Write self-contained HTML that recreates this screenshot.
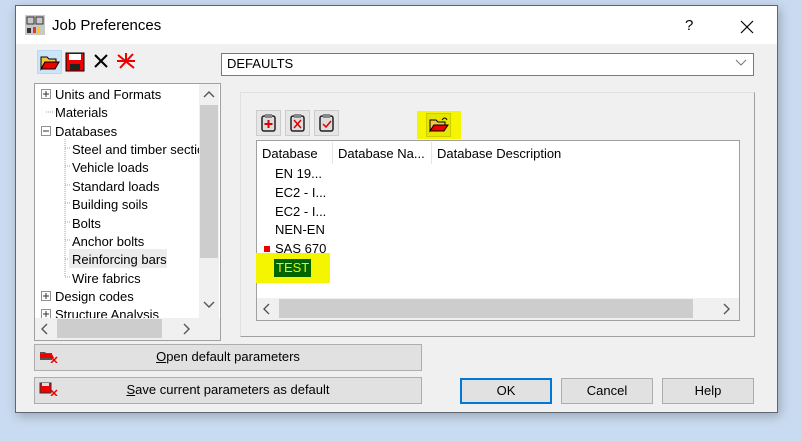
<!DOCTYPE html>
<html><head><meta charset="utf-8"><style>
*{margin:0;padding:0;box-sizing:border-box}
body{width:801px;height:441px;background:#c9dbf0;font-family:"Liberation Sans",sans-serif;font-size:13px;color:#000;position:relative;overflow:hidden}
.abs{position:absolute}
#win{left:15px;top:5px;width:763px;height:408px;background:#f0f0f0;border:1px solid #5f6670;box-shadow:2px 3px 10px rgba(0,0,0,.25)}
#title{left:0;top:0;width:761px;height:38px;background:#fff}
.t{position:absolute;white-space:nowrap}
.btn{position:absolute;background:#e1e1e1;border:1px solid #adadad;text-align:center;line-height:24px}
.sb{background:#cdcdcd}
</style></head><body>
<div id="win" class="abs">
 <div id="title" class="abs">
  <svg class="abs" style="left:9px;top:9px" width="20" height="20"><rect width="20" height="20" fill="#c8c8c8"/><rect x="2" y="2" width="7" height="7" fill="none" stroke="#333"/><rect x="11" y="2" width="7" height="7" fill="none" stroke="#333"/><rect x="2" y="13" width="4" height="5" fill="#333"/><rect x="8" y="12" width="3" height="6" fill="#e33"/><rect x="12" y="12" width="3" height="6" fill="#fc0"/></svg>
  <div class="t" style="left:36px;top:11px;font-size:15px">Job Preferences</div>
  <div class="t" style="left:669px;top:11px;font-size:15px">?</div>
  <svg class="abs" style="left:724px;top:14px" width="14" height="14"><path d="M1 1L13 13M13 1L1 13" stroke="#000" stroke-width="1.2"/></svg>
 </div>
</div>
<!-- toolbar -->
<div class="abs" style="left:37px;top:50px;width:25px;height:24px;background:#cce4f7;border:1px solid #b9d8f1"></div>
<svg class="abs" style="left:40px;top:53px" width="20" height="18"><path d="M1 4h6l2 2h7v3H5L1 16z" fill="#f5c542" stroke="#000"/><path d="M5 9h14l-4 7H1z" fill="#e00" stroke="#000"/></svg>
<svg class="abs" style="left:65px;top:52px" width="20" height="20"><rect x="1" y="1" width="18" height="18" fill="#e00" stroke="#000"/><rect x="4" y="2" width="12" height="6" fill="#fff"/><rect x="5" y="12" width="10" height="6" fill="#222"/></svg>
<svg class="abs" style="left:93px;top:53px" width="16" height="16"><path d="M2 2L14 14M14 2L2 14" stroke="#000" stroke-width="2"/></svg>
<svg class="abs" style="left:116px;top:52px" width="20" height="18"><path d="M2 3L18 16M17 2L4 16M1 9h18M10 1v7" stroke="#e00" stroke-width="2"/></svg>
<!-- combo -->
<div class="abs" style="left:221px;top:53px;width:533px;height:23px;background:#fff;border:1px solid #7a7a7a"></div>
<div class="t" style="left:227px;top:56px">DEFAULTS</div>
<svg class="abs" style="left:735px;top:59px" width="12" height="8"><path d="M1 1l5 5 5-5" stroke="#777" fill="none"/></svg>
<!-- tree -->
<div class="abs" style="left:34px;top:83px;width:187px;height:258px;background:#fff;border:1px solid #a0a0a0"></div>
<div class="abs" style="left:199px;top:84px;width:20px;height:234px;background:#f0f0f0"></div>
<div class="abs sb" style="left:200px;top:105px;width:18px;height:153px"></div>
<svg class="abs" style="left:203px;top:91px" width="12" height="8"><path d="M1 6l5-5 5 5" stroke="#555" fill="none" stroke-width="1.4"/></svg>
<svg class="abs" style="left:203px;top:301px" width="12" height="8"><path d="M1 1l5 5 5-5" stroke="#555" fill="none" stroke-width="1.4"/></svg>
<div class="abs" style="left:35px;top:318px;width:185px;height:22px;background:#f0f0f0"></div>
<div class="abs sb" style="left:57px;top:319px;width:105px;height:19px"></div>
<svg class="abs" style="left:41px;top:323px" width="8" height="12"><path d="M6 1L1 6l5 5" stroke="#555" fill="none" stroke-width="1.4"/></svg>
<svg class="abs" style="left:183px;top:323px" width="8" height="12"><path d="M1 1l5 5-5 5" stroke="#555" fill="none" stroke-width="1.4"/></svg>
<div class="abs" style="left:35px;top:84px;width:164px;height:234px;overflow:hidden">
 <svg class="abs" style="left:0;top:0" width="60" height="240">
  <g stroke="#a0a0a0" stroke-dasharray="1 1" fill="none">
   <path d="M11 28H19M30 55V193M30 64H36M30 82H36M30 101H36M30 119H36M30 138H36M30 156H36M30 175H36M30 193H36"/>
  </g>
  <g fill="#fff" stroke="#919191"><rect x="6.5" y="5.5" width="9" height="9"/><rect x="6.5" y="42.5" width="9" height="9"/><rect x="6.5" y="207.5" width="9" height="9"/><rect x="6.5" y="225.5" width="9" height="9"/></g>
  <g stroke="#333"><path d="M8 10h6M11 7v6M8 47h6M8 212h6M11 209v6M8 230h6M11 227v6"/></g>
 </svg>
 <div class="t" style="left:20px;top:3px">Units and Formats</div>
 <div class="t" style="left:20px;top:21px">Materials</div>
 <div class="t" style="left:20px;top:40px">Databases</div>
 <div class="t" style="left:37px;top:58px">Steel and timber sections</div>
 <div class="t" style="left:37px;top:76px">Vehicle loads</div>
 <div class="t" style="left:37px;top:95px">Standard loads</div>
 <div class="t" style="left:37px;top:113px">Building soils</div>
 <div class="t" style="left:37px;top:132px">Bolts</div>
 <div class="t" style="left:37px;top:150px">Anchor bolts</div>
 <div class="abs" style="left:34px;top:165px;width:98px;height:19px;background:#ececec"></div>
 <div class="t" style="left:37px;top:168px">Reinforcing bars</div>
 <div class="t" style="left:37px;top:187px">Wire fabrics</div>
 <div class="t" style="left:20px;top:205px">Design codes</div>
 <div class="t" style="left:20px;top:223px">Structure Analysis</div>
</div>
<!-- right group -->
<div class="abs" style="left:240px;top:92px;width:515px;height:245px;border:1px solid #fff;border-right-color:#a0a0a0;border-bottom-color:#a0a0a0;border-left-color:#e0e0e0;border-top-color:#e0e0e0"></div>
<div class="abs" style="left:256px;top:110px;width:25px;height:26px;background:#e6e6e6;border:1px solid #ccc"></div>
<div class="abs" style="left:285px;top:110px;width:25px;height:26px;background:#e6e6e6;border:1px solid #ccc"></div>
<div class="abs" style="left:314px;top:110px;width:25px;height:26px;background:#e6e6e6;border:1px solid #ccc"></div>
<svg class="abs" style="left:260px;top:113px" width="18" height="20"><rect x="2" y="3" width="13" height="15" rx="2" fill="#ddd" stroke="#222" stroke-width="1.5"/><rect x="5" y="1" width="7" height="4" fill="#888"/><path d="M8.5 7v8M4.5 11h8" stroke="#d00" stroke-width="2"/></svg>
<svg class="abs" style="left:289px;top:113px" width="18" height="20"><rect x="2" y="3" width="13" height="15" rx="2" fill="#ddd" stroke="#222" stroke-width="1.5"/><rect x="5" y="1" width="7" height="4" fill="#888"/><path d="M5 7l7 8M12 7l-7 8" stroke="#d00" stroke-width="1.5"/></svg>
<svg class="abs" style="left:318px;top:113px" width="18" height="20"><rect x="2" y="3" width="13" height="15" rx="2" fill="#ddd" stroke="#222" stroke-width="1.5"/><rect x="5" y="1" width="7" height="4" fill="#888"/><path d="M5 11l3 3 5-6" stroke="#d00" stroke-width="1.5" fill="none"/></svg>
<div class="abs" style="left:417px;top:111px;width:44px;height:28px;background:#f5f500"></div>
<div class="abs" style="left:426px;top:113px;width:25px;height:24px;background:#e6e600;border:1px solid #cc0"></div>
<svg class="abs" style="left:429px;top:115px" width="20" height="18"><path d="M1 5h6l2 2h7v3H5L1 16z" fill="#f5c542" stroke="#000"/><path d="M5 10h14l-4 6H1z" fill="#e00" stroke="#000"/><path d="M13 5q3-4 5 0" stroke="#000" fill="none"/></svg>
<!-- list -->
<div class="abs" style="left:256px;top:140px;width:484px;height:181px;background:#fff;border:1px solid #a0a0a0"></div>
<div class="abs" style="left:332px;top:142px;width:1px;height:22px;background:#e5e5e5"></div>
<div class="abs" style="left:431px;top:142px;width:1px;height:22px;background:#e5e5e5"></div>
<div class="t" style="left:262px;top:146px">Database</div>
<div class="t" style="left:338px;top:146px">Database Na...</div>
<div class="t" style="left:437px;top:146px">Database Description</div>
<div class="t" style="left:275px;top:166px">EN 19...</div>
<div class="t" style="left:275px;top:185px">EC2 - I...</div>
<div class="t" style="left:275px;top:204px">EC2 - I...</div>
<div class="t" style="left:275px;top:222px">NEN-EN</div>
<div class="abs" style="left:264px;top:246px;width:6px;height:6px;background:#e00"></div>
<div class="t" style="left:275px;top:241px">SAS 670</div>
<div class="abs" style="left:256px;top:253px;width:74px;height:30px;background:#f5f500"></div>
<div class="abs" style="left:274px;top:259px;width:37px;height:18px;background:#006400"></div>
<div class="t" style="left:276px;top:260px;color:#e8f500">TEST</div>
<div class="abs" style="left:257px;top:298px;width:482px;height:22px;background:#f0f0f0"></div>
<div class="abs sb" style="left:279px;top:299px;width:414px;height:19px"></div>
<svg class="abs" style="left:263px;top:303px" width="8" height="12"><path d="M6 1L1 6l5 5" stroke="#555" fill="none" stroke-width="1.4"/></svg>
<svg class="abs" style="left:723px;top:303px" width="8" height="12"><path d="M1 1l5 5-5 5" stroke="#555" fill="none" stroke-width="1.4"/></svg>
<!-- bottom buttons -->
<div class="btn" style="left:34px;top:344px;width:388px;height:27px"><u>O</u>pen default parameters</div>
<div class="btn" style="left:34px;top:377px;width:388px;height:27px"><u>S</u>ave current parameters as default</div>
<svg class="abs" style="left:39px;top:349px" width="20" height="14"><path d="M1 3h5l1 1h6v7H1z" fill="#555"/><path d="M1 5h12l2 4H1z" fill="#e00"/><path d="M12 8l6 6M18 8l-6 6" stroke="#e00" stroke-width="1.5"/></svg>
<svg class="abs" style="left:39px;top:382px" width="20" height="14"><rect x="1" y="1" width="11" height="10" fill="#e00" stroke="#333"/><rect x="3" y="1" width="7" height="3" fill="#ddd"/><path d="M12 8l6 6M18 8l-6 6" stroke="#e00" stroke-width="1.5"/></svg>
<div class="btn" style="left:460px;top:378px;width:92px;height:26px;border:2px solid #0078d7;line-height:22px">OK</div>
<div class="btn" style="left:561px;top:378px;width:92px;height:26px">Cancel</div>
<div class="btn" style="left:662px;top:378px;width:92px;height:26px">Help</div>
</body></html>
